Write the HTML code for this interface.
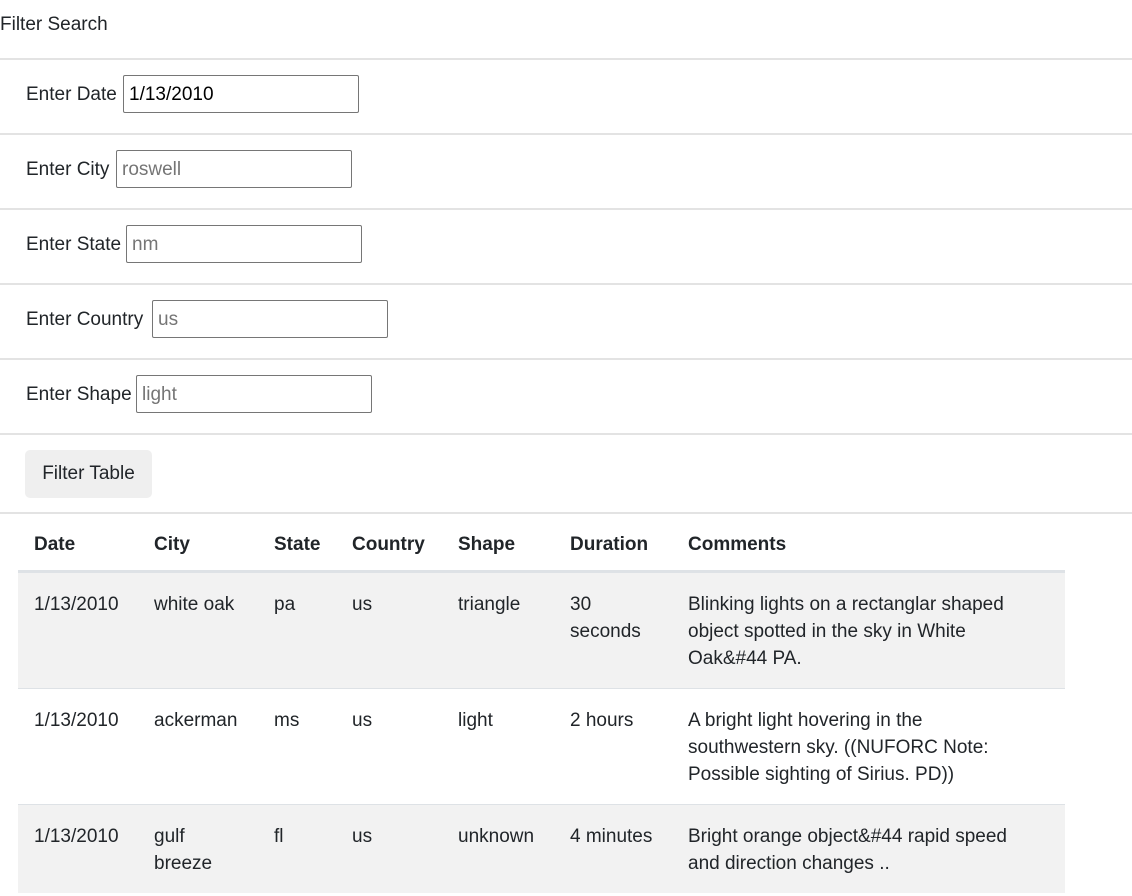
<!DOCTYPE html>
<html><head><style>
body{margin:0;font-family:"Liberation Sans",sans-serif;color:#212529;font-size:19px;width:1132px;height:896px;overflow:hidden;position:relative;background:#fff}
.a{position:absolute}
.hr{position:absolute;left:0;width:1132px;height:0;border-top:2px solid #e3e3e3}
.lbl{position:absolute;left:26px;line-height:24px}
.inp{position:absolute;width:229px;height:36px;border:1px solid #767676;border-radius:2px;line-height:38px;padding-left:5px;box-sizing:content-box;color:#757575;font-size:19px}
table{position:absolute;left:18px;top:520px;width:1047px;border-collapse:collapse;table-layout:fixed;font-size:19px}
th{text-align:left;font-weight:bold;height:50px;padding:0 16px;border-bottom:3px solid #dee2e6;vertical-align:middle}
td{padding:18px 16px 16px;vertical-align:top;line-height:27px;white-space:nowrap}
tr.g td{background:#f2f2f2}
tr.b td{border-top:1px solid #dee2e6}
</style></head><body>
<div class="a" style="left:0;top:13px;line-height:24px">Filter Search</div>
<div class="hr" style="top:58px"></div>
<div class="lbl" style="top:83px">Enter Date</div><div class="inp" style="left:123px;top:75px;color:#000">1/13/2010</div>
<div class="hr" style="top:133px"></div>
<div class="lbl" style="top:158px">Enter City</div><div class="inp" style="left:116px;top:150px">roswell</div>
<div class="hr" style="top:208px"></div>
<div class="lbl" style="top:233px">Enter State</div><div class="inp" style="left:126px;top:225px">nm</div>
<div class="hr" style="top:283px"></div>
<div class="lbl" style="top:308px">Enter Country</div><div class="inp" style="left:152px;top:300px">us</div>
<div class="hr" style="top:358px"></div>
<div class="lbl" style="top:383px">Enter Shape</div><div class="inp" style="left:136px;top:375px">light</div>
<div class="hr" style="top:433px"></div>
<div class="a" style="left:25px;top:450px;width:127px;height:48px;background:#efefef;border-radius:5px;text-align:center;line-height:48px">Filter Table</div>
<div class="hr" style="top:512px"></div>
<table>
<colgroup><col style="width:120px"><col style="width:120px"><col style="width:78px"><col style="width:106px"><col style="width:112px"><col style="width:118px"><col></colgroup>
<tr><th>Date</th><th>City</th><th>State</th><th>Country</th><th>Shape</th><th>Duration</th><th>Comments</th></tr>
<tr class="g"><td>1/13/2010</td><td>white oak</td><td>pa</td><td>us</td><td>triangle</td><td>30<br>seconds</td><td>Blinking lights on a rectanglar shaped<br>object spotted in the sky in White<br>Oak&amp;#44 PA.</td></tr>
<tr class="b"><td>1/13/2010</td><td>ackerman</td><td>ms</td><td>us</td><td>light</td><td>2 hours</td><td>A bright light hovering in the<br>southwestern sky. ((NUFORC Note:<br>Possible sighting of Sirius. PD))</td></tr>
<tr class="g b"><td>1/13/2010</td><td>gulf<br>breeze</td><td>fl</td><td>us</td><td>unknown</td><td>4 minutes</td><td>Bright orange object&amp;#44 rapid speed<br>and direction changes ..</td></tr>
</table>
</body></html>
